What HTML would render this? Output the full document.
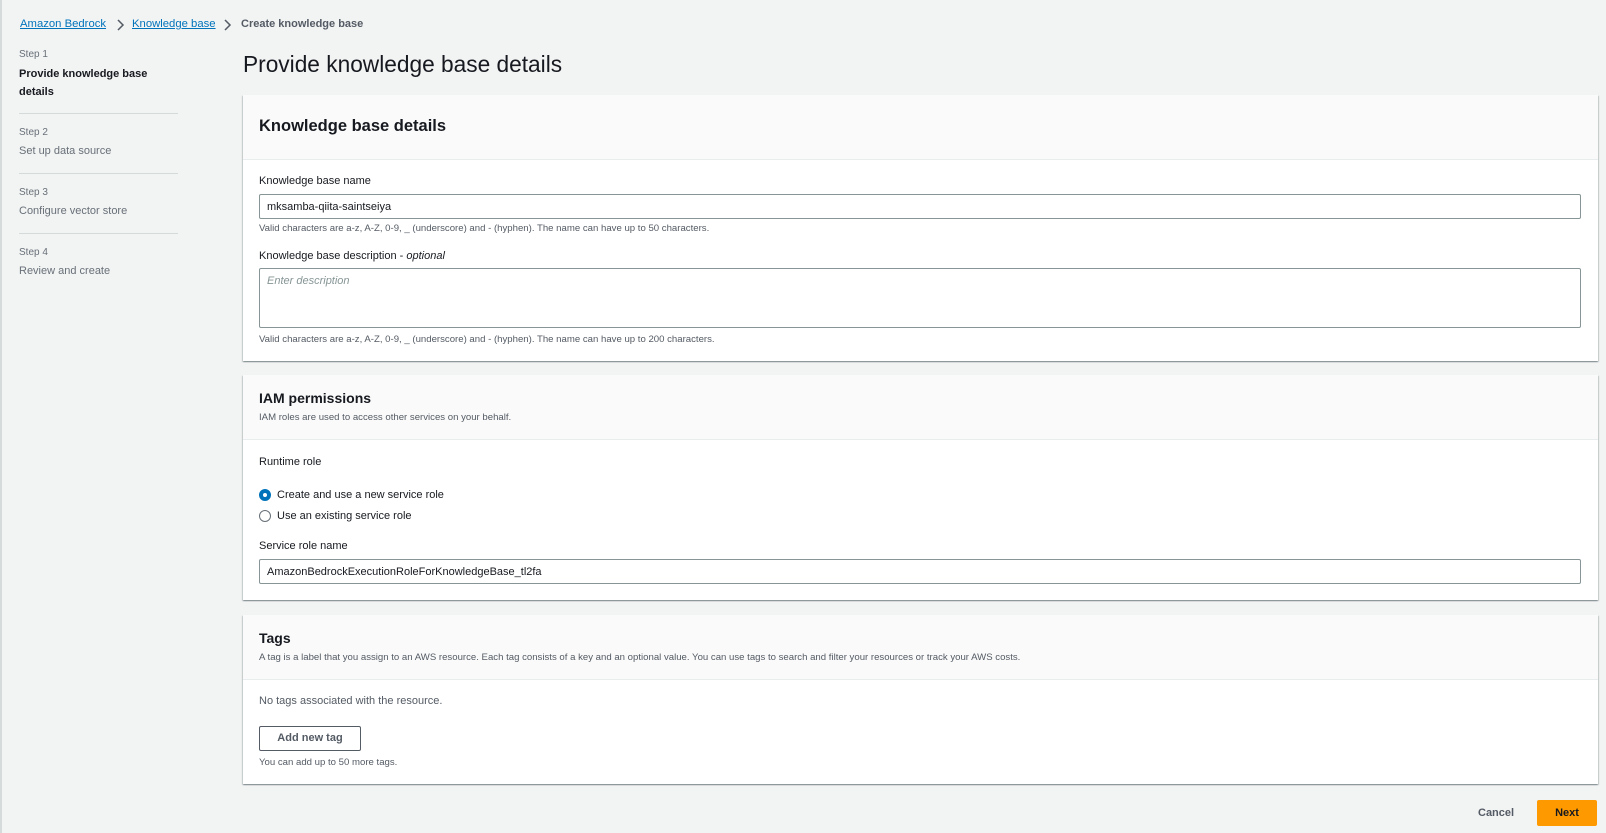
<!DOCTYPE html>
<html><head><meta charset="utf-8"><style>
*{box-sizing:border-box;margin:0;padding:0}
body{width:1606px;height:833px;background:#f2f3f3;font-family:"Liberation Sans",sans-serif;color:#16191f;position:relative;overflow:hidden}
.a{position:absolute;white-space:nowrap}
.lnk{color:#0073bb;text-decoration:underline;font-size:11.3px}
.side{color:#687078;font-size:11px}
.sep{position:absolute;left:19px;width:159px;height:1px;background:#d5dbdb}
.panel{position:absolute;left:243px;width:1355px;background:#fff;box-shadow:0 1px 1px 0 rgba(0,28,36,.3),1px 1px 1px 0 rgba(0,28,36,.15),-1px 1px 1px 0 rgba(0,28,36,.15)}
.ph{position:absolute;left:0;top:0;width:100%;background:#fafafa;border-bottom:1px solid #eaeded}
.lab{font-size:11px;color:#16191f}
.sm{font-size:9.6px;color:#545b64}
.inp{position:absolute;left:16px;width:1322px;height:25px;border:1px solid #879596;border-radius:2px;font-size:11px;padding:6px 7px;color:#16191f}
</style></head><body>
<div class="a" style="left:0;top:0;width:2px;height:833px;background:#d5dbdb"></div>
<div class="a lnk" style="left:20px;top:18px">Amazon Bedrock</div>
<svg class="a" style="left:115px;top:18px" width="10" height="14" viewBox="0 0 10 14"><path d="M3 2l5 5-5 5" fill="none" stroke="#545b64" stroke-width="1.5"/></svg>
<div class="a lnk" style="left:132px;top:18px">Knowledge base</div>
<svg class="a" style="left:222px;top:18px" width="10" height="14" viewBox="0 0 10 14"><path d="M3 2l5 5-5 5" fill="none" stroke="#545b64" stroke-width="1.5"/></svg>
<div class="a" style="left:241px;top:18px;font-size:11px;color:#545b64;font-weight:bold">Create knowledge base</div>

<div class="a side" style="left:19px;top:49px;font-size:10px">Step 1</div>
<div class="a" style="left:19px;top:65px;font-size:11px;font-weight:bold;line-height:18px;white-space:normal;width:140px">Provide knowledge base details</div>
<div class="sep" style="top:113px"></div>
<div class="a side" style="left:19px;top:127px;font-size:10px">Step 2</div>
<div class="a side" style="left:19px;top:145px">Set up data source</div>
<div class="sep" style="top:173px"></div>
<div class="a side" style="left:19px;top:187px;font-size:10px">Step 3</div>
<div class="a side" style="left:19px;top:205px">Configure vector store</div>
<div class="sep" style="top:233px"></div>
<div class="a side" style="left:19px;top:247px;font-size:10px">Step 4</div>
<div class="a side" style="left:19px;top:265px">Review and create</div>

<div class="a" style="left:243px;top:51px;font-size:22.7px;color:#16191f">Provide knowledge base details</div>

<div class="panel" style="top:95px;height:266px">
 <div class="ph" style="height:65px"><div class="a" style="left:16px;top:22px;font-size:16.5px;font-weight:bold">Knowledge base details</div></div>
 <div class="a lab" style="left:16px;top:80px">Knowledge base name</div>
 <div class="inp" style="top:99px">mksamba-qiita-saintseiya</div>
 <div class="a sm" style="left:16px;top:128px">Valid characters are a-z, A-Z, 0-9, _ (underscore) and - (hyphen). The name can have up to 50 characters.</div>
 <div class="a lab" style="left:16px;top:155px">Knowledge base description - <i>optional</i></div>
 <div class="inp" style="top:173px;height:60px;color:#879596;font-style:italic">Enter description</div>
 <div class="a sm" style="left:16px;top:239px">Valid characters are a-z, A-Z, 0-9, _ (underscore) and - (hyphen). The name can have up to 200 characters.</div>
</div>

<div class="panel" style="top:375px;height:225px">
 <div class="ph" style="height:65px"><div class="a" style="left:16px;top:15px;font-size:14px;font-weight:bold">IAM permissions</div>
 <div class="a sm" style="left:16px;top:37px">IAM roles are used to access other services on your behalf.</div></div>
 <div class="a lab" style="left:16px;top:81px">Runtime role</div>
 <div class="a" style="left:16px;top:114px;width:12px;height:12px;border-radius:50%;border:4px solid #0073bb"></div>
 <div class="a lab" style="left:34px;top:114px">Create and use a new service role</div>
 <div class="a" style="left:16px;top:135px;width:12px;height:12px;border-radius:50%;border:1px solid #687078"></div>
 <div class="a lab" style="left:34px;top:135px">Use an existing service role</div>
 <div class="a lab" style="left:16px;top:165px">Service role name</div>
 <div class="inp" style="top:184px">AmazonBedrockExecutionRoleForKnowledgeBase_tl2fa</div>
</div>

<div class="panel" style="top:615px;height:169px">
 <div class="ph" style="height:65px"><div class="a" style="left:16px;top:15px;font-size:14px;font-weight:bold">Tags</div>
 <div class="a sm" style="left:16px;top:37px">A tag is a label that you assign to an AWS resource. Each tag consists of a key and an optional value. You can use tags to search and filter your resources or track your AWS costs.</div></div>
 <div class="a" style="left:16px;top:80px;font-size:11px;color:#545b64">No tags associated with the resource.</div>
 <div class="a" style="left:16px;top:111px;width:102px;height:25px;border:1px solid #545b64;border-radius:2px;font-size:11px;font-weight:bold;color:#545b64;text-align:center;line-height:23px">Add new tag</div>
 <div class="a sm" style="left:16px;top:142px">You can add up to 50 more tags.</div>
</div>

<div class="a" style="left:1478px;top:807px;font-size:11px;font-weight:bold;color:#545b64">Cancel</div>
<div class="a" style="left:1537px;top:800px;width:60px;height:26px;background:#ff9900;border-radius:2px;font-size:11px;font-weight:bold;color:#16191f;text-align:center;line-height:26px">Next</div>
</body></html>
